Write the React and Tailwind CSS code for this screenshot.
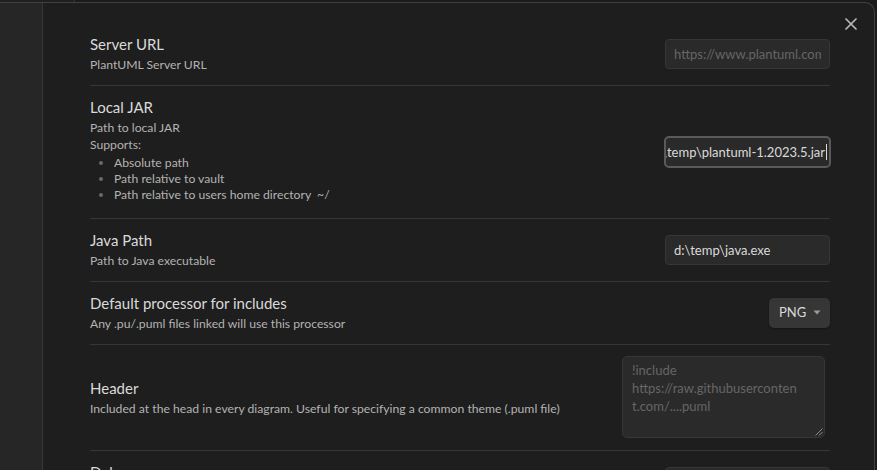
import React from "react";

function Title({ children }) {
  return <div className="text-[15px] leading-[20px] text-[#dadada]">{children}</div>;
}

function Desc({ children }) {
  return <div className="mt-[2px] text-[12.2px] leading-[17px] text-[#b3b3b3]">{children}</div>;
}

function Row({ first, title, desc, control }) {
  return (
    <div className={"flex items-center pb-3 pt-[11px] " + (first ? "" : "border-t border-[#363636]")}>
      <div className="min-w-0 flex-1 pr-4">
        <Title>{title}</Title>
        <Desc>{desc}</Desc>
      </div>
      <div className="flex shrink-0 justify-end">{control}</div>
    </div>
  );
}

function TextInput({ value, placeholder }) {
  return (
    <div className="flex h-[30px] w-[165px] items-center rounded-[4px] border border-[#363636] bg-[#2a2a2a] px-2 text-[13px] leading-[18px]">
      <div className="min-w-0 flex-1 overflow-hidden">
        {value ? (
          <span className="whitespace-nowrap text-[#dadada]">{value}</span>
        ) : (
          <span className="whitespace-nowrap text-[#666666]">{placeholder}</span>
        )}
      </div>
    </div>
  );
}

function FocusedInput({ value }) {
  return (
    <div className="flex h-[32px] w-[167px] items-center justify-end overflow-hidden rounded-[5px] border-2 border-[#5a5a5a] bg-[#2a2a2a] pl-2 pr-[2px] text-[13px] leading-[18px]">
      <span className="shrink-0 whitespace-nowrap text-[#dadada]">{value}</span>
      <span className="ml-[1px] h-[16px] w-[1px] shrink-0 bg-[#dadada]" />
    </div>
  );
}

function Dropdown() {
  return (
    <div className="flex h-[30px] w-[61px] items-center rounded-[5px] bg-[#363636] pl-[10px] text-[13px] text-[#dadada] shadow-[0_1px_2px_rgba(0,0,0,0.35)]">
      <span>PNG</span>
      <svg width="8" height="5" viewBox="0 0 8 5" className="ml-[7px]">
        <path d="M0.5 0.5 L7.5 0.5 L4 4.5 Z" fill="#9a9a9a" />
      </svg>
    </div>
  );
}

function TextArea() {
  return (
    <div className="relative mr-[5px] h-[82px] w-[203px] rounded-[5px] border border-[#363636] bg-[#2a2a2a] pl-[9px] pt-[4px] text-[13px] leading-[18px] text-[#666666]">
      <div>!include</div>
      <div>https://raw.githubuserconten</div>
      <div>t.com/....puml</div>
      <svg width="9" height="9" viewBox="0 0 9 9" className="absolute bottom-[1px] right-[1px]">
        <path d="M8.5 1.5 L1.5 8.5 M8.5 5 L5 8.5" stroke="#8a8a8a" strokeWidth="1" />
      </svg>
    </div>
  );
}

export default function App() {
  return (
    <div className="flex h-[470px] w-[877px] flex-col overflow-hidden bg-[#1b1b1b] font-['Lato',sans-serif]">
      <div className="flex h-[2px] shrink-0">
        <div className="w-[75px] border-r border-[#333333] bg-[#202020]" />
        <div className="flex-1 bg-[#1b1b1b]" />
      </div>
      <div className="flex min-h-0 w-[875px] flex-1 rounded-tr-[10px] border-r border-t border-[#404040] bg-[#1e1e1e]">
        <aside className="w-[43px] shrink-0 border-r border-[#363636] bg-[#262626]" />
        <main className="relative min-w-0 flex-1 pl-[47px] pr-[44px] pt-[20px]">
          <button className="absolute right-[15px] top-[13px] flex h-[16px] w-[16px] items-center justify-center">
            <svg width="12" height="12" viewBox="0 0 12 12">
              <path d="M1 1 L11 11 M11 1 L1 11" stroke="#b8b8b8" strokeWidth="1.7" strokeLinecap="round" />
            </svg>
          </button>

          <Row
            first
            title="Server URL"
            desc="PlantUML Server URL"
            control={<TextInput placeholder="https://www.plantuml.com" />}
          />

          <div className="flex items-center border-t border-[#363636] pb-3 pt-[11px]">
            <div className="min-w-0 flex-1 pr-4">
              <Title>Local JAR</Title>
              <Desc>
                <div>Path to local JAR</div>
                <div>Supports:</div>
                <ul className="mb-[3px] mt-[2px]">
                  {["Absolute path", "Path relative to vault", "Path relative to users home directory  ~/"].map((t) => (
                    <li key={t} className="flex items-center leading-[16px]">
                      <span className="ml-[9px] mr-[11px] h-[4px] w-[4px] shrink-0 rounded-full bg-[#6a6a6a]" />
                      <span className="whitespace-pre">{t}</span>
                    </li>
                  ))}
                </ul>
              </Desc>
            </div>
            <div className="-mr-[1px] flex shrink-0 justify-end">
              <FocusedInput value="d:\temp\plantuml-1.2023.5.jar" />
            </div>
          </div>

          <Row title="Java Path" desc="Path to Java executable" control={<TextInput value="d:\temp\java.exe" />} />

          <Row
            title="Default processor for includes"
            desc="Any .pu/.puml files linked will use this processor"
            control={<Dropdown />}
          />

          <Row
            title="Header"
            desc="Included at the head in every diagram. Useful for specifying a common theme (.puml file)"
            control={<TextArea />}
          />

          <Row title="Debounce" desc="How often should the diagram refresh in seconds" control={<TextInput value="3" />} />
        </main>
      </div>
    </div>
  );
}
